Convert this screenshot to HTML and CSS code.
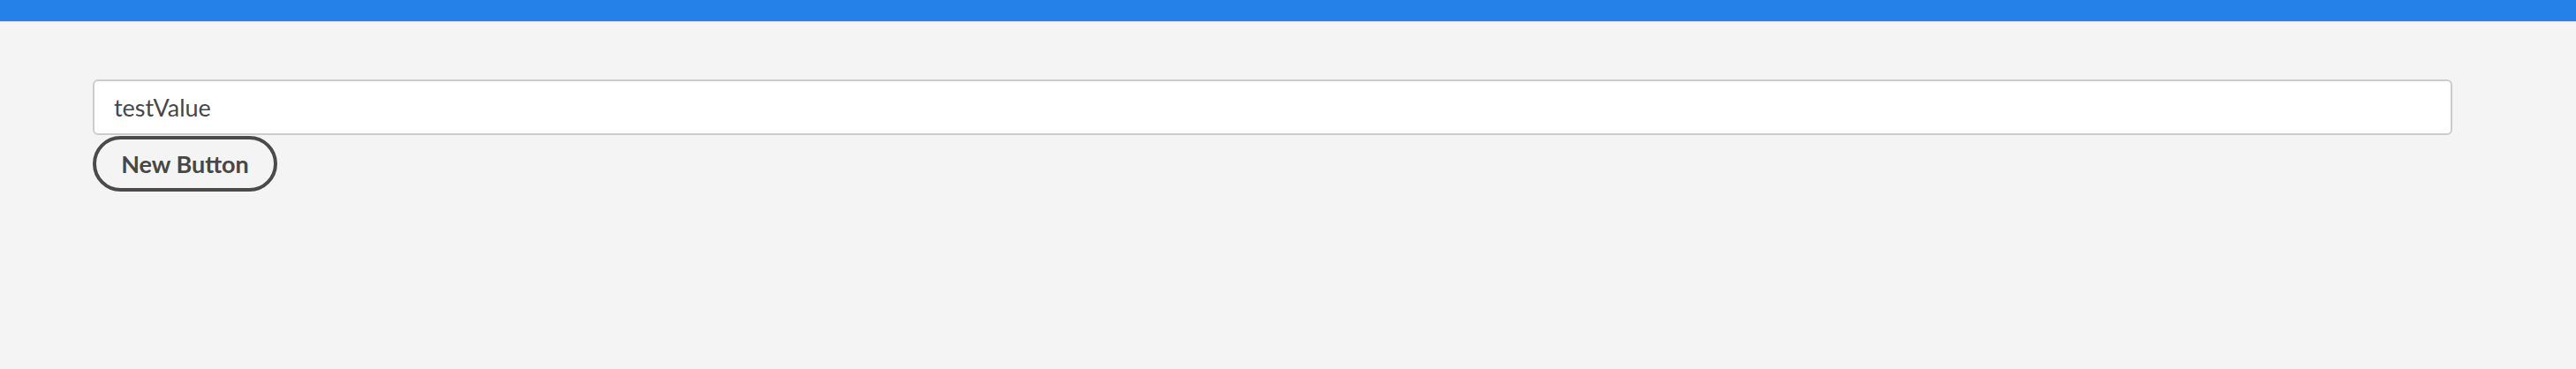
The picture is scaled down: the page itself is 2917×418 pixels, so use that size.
FILE: index.html
```html
<!DOCTYPE html>
<html>
<head>
<meta charset="utf-8">
<link rel="stylesheet" href="styles.css">
</head>
<body>
<header class="topbar"></header>
<main class="content">
  <input class="text-input" type="text" value="testValue">
  <button class="pill-button">New Button</button>
</main>
</body>
</html>
```
FILE: styles.css
```css
html, body {
  margin: 0;
  padding: 0;
  background: #f4f4f4;
  font-family: Lato, "Open Sans", sans-serif;
}
.topbar {
  height: 24px;
  background: #2580e8;
  border-bottom: 1px solid #dedede;
}
.content {
  padding: 65px 140px 0 105px;
  display: flex;
  flex-direction: column;
  align-items: flex-start;
  gap: 1px;
}
.text-input {
  box-sizing: border-box;
  width: 2672px;
  height: 63px;
  border: 2px solid #cccccc;
  border-radius: 6px;
  background: #ffffff;
  padding: 0 0 0 22px;
  font-family: Lato, "Open Sans", sans-serif;
  font-size: 27px;
  color: #474747;
  outline: none;
}
.pill-button {
  box-sizing: border-box;
  height: 63px;
  width: 209px;
  border: 4px solid #4a4a4a;
  border-radius: 32px;
  background: transparent;
  font-family: Lato, "Open Sans", sans-serif;
  font-weight: 700;
  font-size: 27px;
  color: #474747;
  padding: 0;
}
```
